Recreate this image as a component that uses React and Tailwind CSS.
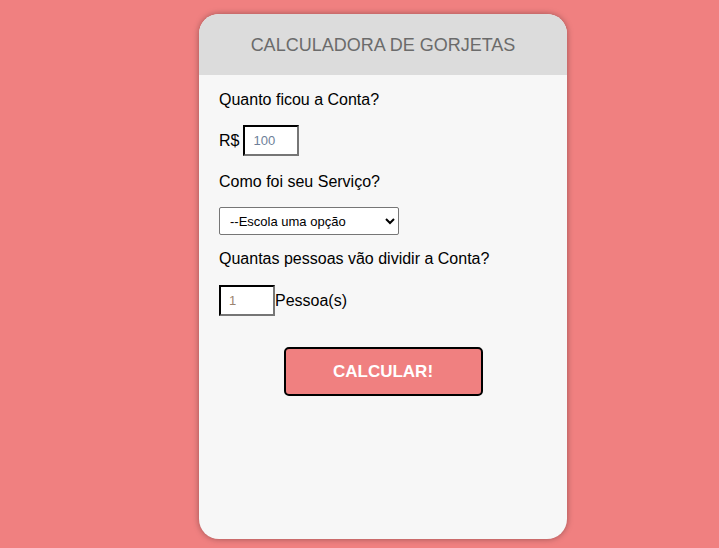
import { useState } from 'react';

const inputBorda =
  'border-2 [border-style:inset] border-t-[#2b2b2b] border-l-[#2b2b2b] border-b-[#767676] border-r-[#767676] bg-white outline-none';

const App = () => {
  const [conta, setConta] = useState('');
  const [servico, setServico] = useState('');
  const [pessoas, setPessoas] = useState('');

  return (
    <div className="min-h-[548px] w-full bg-[#f08080] pt-[14px] pl-[199px] font-['Liberation_Sans',Arial,sans-serif]">
      <div className="w-[368px] h-[525px] bg-[#f7f7f7] rounded-[20px] overflow-hidden shadow-[0_0_6px_rgba(0,0,0,0.35)]">
        <div className="h-[61px] bg-[#dcdcdc] flex items-center justify-center">
          <h1 className="text-[18px] text-[#6b6b6b] leading-none">CALCULADORA DE GORJETAS</h1>
        </div>

        <div className="px-[20px] text-[16px] text-black leading-[18px]">
          <p className="mt-[16px]">Quanto ficou a Conta?</p>

          <div className="mt-[16px] flex items-center">
            <span>R$</span>
            <input
              value={conta}
              onChange={(e) => setConta(e.target.value)}
              placeholder="100"
              className={`${inputBorda} ml-[4px] w-[56px] h-[31px] px-[8px] text-[13px] placeholder:text-[#6e7f99]`}
            />
          </div>

          <p className="mt-[17px]">Como foi seu Serviço?</p>

          <select
            value={servico}
            onChange={(e) => setServico(e.target.value)}
            className="mt-[16px] w-[180px] h-[28px] border border-[#767676] rounded-[2px] bg-white text-[13px] pl-[6px] text-black"
          >
            <option value="">--Escola uma opção</option>
            <option value="0.3">30% - Muito bom</option>
            <option value="0.1">10% - Bom</option>
            <option value="0.05">5% - Ruim</option>
          </select>

          <p className="mt-[15px]">Quantas pessoas vão dividir a Conta?</p>

          <div className="mt-[17px] flex items-center">
            <input
              value={pessoas}
              onChange={(e) => setPessoas(e.target.value)}
              placeholder="1"
              className={`${inputBorda} w-[56px] h-[31px] px-[8px] text-[13px] placeholder:text-[#9a8470]`}
            />
            <span>Pessoa(s)</span>
          </div>

          <div className="flex justify-center mt-[31px]">
            <button
              type="button"
              className="w-[199px] h-[49px] bg-[#f08080] border-2 border-black rounded-[5px] text-white font-bold text-[17px]"
            >
              CALCULAR!
            </button>
          </div>
        </div>
      </div>
    </div>
  );
};

export default App;
